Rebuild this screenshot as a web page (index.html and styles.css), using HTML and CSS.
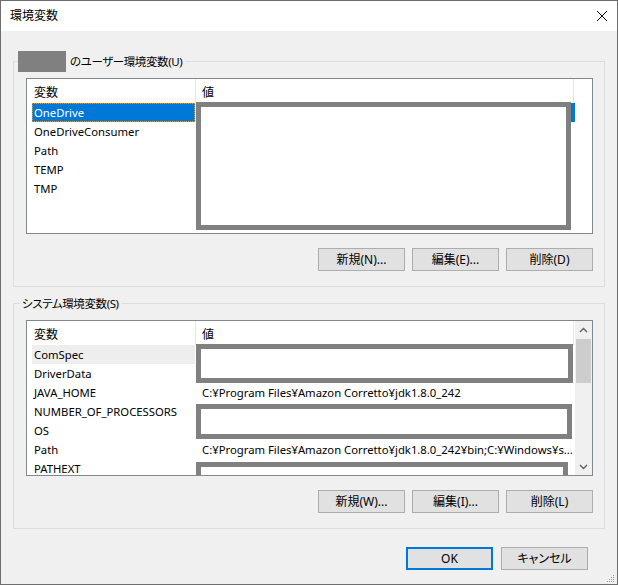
FILE: index.html
```html
<!DOCTYPE html>
<html lang="ja">
<head>
<meta charset="utf-8">
<title>環境変数</title>
<link rel="stylesheet" href="styles.css">
</head>
<body>
<div class="window">
  <div class="titlebar">
    <span class="title">環境変数</span>
    <svg class="close" width="12" height="12" viewBox="0 0 12 12"><path d="M1 1 L11 11 M11 1 L1 11" stroke="#000" stroke-width="1" fill="none"/></svg>
  </div>
  <div class="content">
    <div class="group group-user">
      <div class="legend legend-user"><span class="redact"></span><span class="legend-text">のユーザー環境変数(U)</span></div>
      <div class="list">
        <div class="list-head"><div class="head-name">変数</div><div class="head-value">値</div></div>
        <div class="rows">
          <div class="row selected"><div class="cell-name">OneDrive</div><div class="cell-value"></div></div>
          <div class="row"><div class="cell-name">OneDriveConsumer</div><div class="cell-value"></div></div>
          <div class="row"><div class="cell-name">Path</div><div class="cell-value"></div></div>
          <div class="row"><div class="cell-name">TEMP</div><div class="cell-value"></div></div>
          <div class="row"><div class="cell-name">TMP</div><div class="cell-value"></div></div>
        </div>
        <div class="mask mask-user"></div>
      </div>
      <div class="buttons">
        <button class="btn">新規(N)...</button>
        <button class="btn">編集(E)...</button>
        <button class="btn">削除(D)</button>
      </div>
    </div>

    <div class="group group-system">
      <div class="legend legend-system"><span class="legend-text">システム環境変数(S)</span></div>
      <div class="list">
        <div class="list-inner">
          <div class="list-main">
            <div class="list-head"><div class="head-name">変数</div><div class="head-value">値</div></div>
            <div class="rows">
              <div class="row hover"><div class="cell-name">ComSpec</div><div class="cell-value"></div></div>
              <div class="row"><div class="cell-name">DriverData</div><div class="cell-value"></div></div>
              <div class="row"><div class="cell-name">JAVA_HOME</div><div class="cell-value">C:¥Program Files¥Amazon Corretto¥jdk1.8.0_242</div></div>
              <div class="row"><div class="cell-name">NUMBER_OF_PROCESSORS</div><div class="cell-value"></div></div>
              <div class="row"><div class="cell-name">OS</div><div class="cell-value"></div></div>
              <div class="row"><div class="cell-name">Path</div><div class="cell-value">C:¥Program Files¥Amazon Corretto¥jdk1.8.0_242¥bin;C:¥Windows¥s...</div></div>
              <div class="row"><div class="cell-name">PATHEXT</div><div class="cell-value"></div></div>
            </div>
            <div class="mask mask-a"></div>
            <div class="mask mask-b"></div>
            <div class="mask mask-c"></div>
          </div>
          <div class="scrollbar">
            <div class="sb-arrow"><svg width="9" height="6" viewBox="0 0 9 6"><path d="M1 5 L4.5 1.5 L8 5" stroke="#606060" stroke-width="1.4" fill="none"/></svg></div>
            <div class="sb-thumb"></div>
            <div class="sb-track"></div>
            <div class="sb-arrow"><svg width="9" height="6" viewBox="0 0 9 6"><path d="M1 1 L4.5 4.5 L8 1" stroke="#606060" stroke-width="1.4" fill="none"/></svg></div>
          </div>
        </div>
      </div>
      <div class="buttons">
        <button class="btn">新規(W)...</button>
        <button class="btn">編集(I)...</button>
        <button class="btn">削除(L)</button>
      </div>
    </div>

    <div class="footer">
      <button class="btn btn-default">OK</button>
      <button class="btn">キャンセル</button>
    </div>
  </div>
  <svg class="grip" width="9" height="9" viewBox="0 0 9 9">
    <rect x="7" y="1" width="1" height="1" fill="#9a9a9a"/>
    <rect x="5" y="3" width="1" height="1" fill="#9a9a9a"/>
    <rect x="7" y="3" width="1" height="1" fill="#9a9a9a"/>
    <rect x="3" y="5" width="1" height="1" fill="#9a9a9a"/>
    <rect x="5" y="5" width="1" height="1" fill="#9a9a9a"/>
    <rect x="7" y="5" width="1" height="1" fill="#9a9a9a"/>
    <rect x="1" y="7" width="1" height="1" fill="#9a9a9a"/>
    <rect x="3" y="7" width="1" height="1" fill="#9a9a9a"/>
    <rect x="5" y="7" width="1" height="1" fill="#9a9a9a"/>
    <rect x="7" y="7" width="1" height="1" fill="#9a9a9a"/>
  </svg>
</div>
</body>
</html>
```

FILE: styles.css
```css
* { box-sizing: border-box; }
html, body { margin: 0; padding: 0; background: #fff; }
body {
  font-family: "Noto Sans", "Noto Sans CJK JP", sans-serif;
  font-size: 12px;
  color: #000;
  font-feature-settings: "palt";
}
.window {
  position: relative;
  width: 618px;
  height: 585px;
  border: 1px solid #6e6e6e;
  background: #f0f0f0;
  display: flex;
  flex-direction: column;
}
.titlebar {
  height: 30px;
  background: #fff;
  display: flex;
  align-items: center;
  justify-content: space-between;
  padding: 0 9px 0 9px;
}
.title { font-size: 12px; line-height: 16px; }
.close { margin-top: -1px; }
.content {
  flex: 1;
  padding: 30px 12px 0 12px;
  display: flex;
  flex-direction: column;
}
.group {
  border: 1px solid #dcdcdc;
  display: flex;
  flex-direction: column;
  padding: 0 11px 15px 12px;
}
.group-system { margin-top: 16px; }
.legend {
  height: 22px;
  margin-top: -12px;
  display: flex;
  align-items: center;
  align-self: flex-start;
  background: #f0f0f0;
  line-height: 16px;
  white-space: nowrap;
}
.legend-text { padding-top: 1px; font-size: 11.5px; letter-spacing: -0.4px; }
.legend-user { margin-left: -8px; padding-right: 3px; }
.legend-system { margin-left: -6px; padding: 0 3px 0 2px; }
.redact {
  display: inline-block;
  width: 48px;
  height: 21px;
  background: #808080;
  margin-right: 4px;
}
.list {
  margin-top: 6px;
  height: 156px;
  border: 1px solid #828790;
  background: #fff;
  position: relative;
  overflow: hidden;
}
.list-inner { display: flex; height: 100%; }
.list-main { position: relative; width: 548px; }
.list-head {
  height: 24px;
  display: flex;
  width: 547px;
}
.head-name {
  width: 168px;
  padding: 6px 0 0 7px;
  line-height: 16px;
}
.head-value {
  width: 379px;
  border-left: 1px solid #e5e5e5;
  border-right: 1px solid #e5e5e5;
  padding: 6px 0 0 6px;
  line-height: 16px;
}
.rows { padding-left: 5px; font-size: 11.3px; }
.row {
  display: flex;
  height: 19px;
  white-space: nowrap;
}
.cell-name { width: 163px; padding: 1px 0 0 2px; line-height: 18px; }
.cell-value { width: 379px; padding: 1px 0 0 6px; line-height: 18px; margin-left: 1px; overflow: hidden; }
.row.selected .cell-name,
.row.selected .cell-value {
  background: #0078d7;
  color: #fff;
}
.row.selected .cell-name { outline: 1px dotted #e0a040; outline-offset: -1px; }
.row.hover .cell-name { background: #eeeeee; }
.mask {
  position: absolute;
  border: 5px solid #808080;
  background: #fff;
}
.mask-user { left: 169px; top: 23px; width: 375px; height: 128px; }
.mask-a { left: 169px; top: 23px; width: 377px; height: 39px; }
.mask-b { left: 169px; top: 83px; width: 376px; height: 35px; }
.mask-c { left: 169px; top: 141px; width: 372px; height: 30px; }
.scrollbar {
  width: 17px;
  background: #f0f0f0;
  display: flex;
  flex-direction: column;
  align-items: center;
}
.sb-arrow {
  height: 17px;
  width: 17px;
  display: flex;
  align-items: center;
  justify-content: center;
}
.sb-thumb { width: 15px; height: 44px; background: #cdcdcd; margin-top: 1px; }
.sb-track { flex: 1; }
.buttons {
  margin-top: 14px;
  display: flex;
  justify-content: flex-end;
  gap: 7px;
}
.btn {
  width: 87px;
  height: 23px;
  background: #e1e1e1;
  border: 1px solid #adadad;
  font-family: inherit;
  font-size: 12px;
  font-feature-settings: "palt";
  color: #000;
  padding: 0;
  margin: 0;
  line-height: 16px;
}
.btn-default { border: 2px solid #0078d7; }
.footer {
  margin-top: 18px;
  display: flex;
  justify-content: flex-end;
  gap: 8px;
  padding-right: 17px;
}
.grip { position: absolute; right: 2px; bottom: 1px; }
```
